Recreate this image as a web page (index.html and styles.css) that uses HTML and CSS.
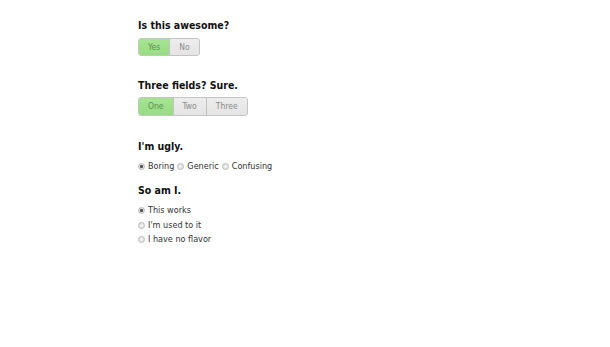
FILE: index.html
```html
<!DOCTYPE html>
<html>
<head>
<meta charset="utf-8">
<link rel="stylesheet" href="styles.css">
</head>
<body>
<div class="page">
  <section class="block block-seg">
    <h2 class="title">Is this awesome?</h2>
    <div class="seg">
      <span class="seg-item on">Yes</span><span class="seg-item">No</span>
    </div>
  </section>
  <section class="block block-seg">
    <h2 class="title">Three fields? Sure.</h2>
    <div class="seg">
      <span class="seg-item on">One</span><span class="seg-item">Two</span><span class="seg-item">Three</span>
    </div>
  </section>
  <section class="block block-radio">
    <h2 class="title">I'm ugly.</h2>
    <div class="radio-row">
      <label class="opt"><input type="radio" name="ugly" checked>Boring</label><label class="opt"><input type="radio" name="ugly">Generic</label><label class="opt"><input type="radio" name="ugly">Confusing</label>
    </div>
  </section>
  <section class="block block-radio2">
    <h2 class="title">So am I.</h2>
    <div class="radio-list">
      <label class="opt"><input type="radio" name="me" checked>This works</label>
      <label class="opt"><input type="radio" name="me">I'm used to it</label>
      <label class="opt"><input type="radio" name="me">I have no flavor</label>
    </div>
  </section>
</div>
</body>
</html>
```

FILE: styles.css
```css
html, body {
  margin: 0;
  padding: 0;
  background: #ffffff;
}
body {
  font-family: "DejaVu Sans Condensed", "DejaVu Sans", sans-serif;
  color: #222;
}
.page {
  padding: 18px 0 0 138px;
  display: flex;
  flex-direction: column;
  align-items: flex-start;
}
.title {
  margin: 0;
  font-size: 10.5px;
  line-height: 14px;
  font-weight: bold;
  color: #111;
}
.block-seg + .block-seg { margin-top: 22.4px; }
.block-radio { margin-top: 22.7px; }
.block-radio2 { margin-top: 9px; }

.seg {
  display: inline-flex;
  margin-top: 6px;
  border: 1px solid #c4c4c4;
  border-radius: 3px;
  overflow: hidden;
  background: #e8e8e8;
}
.block-seg + .block-seg .seg { margin-top: 5px; height: 17px; }
.seg-item {
  font-size: 8.5px;
  line-height: 16px;
  padding: 0 9px;
  color: #8a8a8a;
  background: linear-gradient(#ededed, #e4e4e4);
}
.seg-item + .seg-item {
  border-left: 1px solid #c2c2c2;
}
.seg-item.on {
  background: linear-gradient(#a6e492, #98dc84);
  color: #5e8e50;
}

.radio-row {
  margin-top: 6px;
  display: flex;
  font-size: 9px;
  line-height: 15px;
  color: #333;
}
.radio-row .opt { margin-right: 3px; }
.radio-list {
  margin-top: 6px;
  display: flex;
  flex-direction: column;
  font-size: 9px;
  line-height: 14.7px;
  color: #333;
}
.opt {
  display: flex;
  align-items: center;
}
.opt input {
  -webkit-appearance: none;
  appearance: none;
  margin: 0 3px 0 0;
  width: 7px;
  height: 7px;
  border: 1px solid #b8b8b8;
  border-radius: 50%;
  background: radial-gradient(circle, #f4f4f4 0, #dcdcdc 100%);
  box-sizing: border-box;
}
.opt input:checked {
  background: radial-gradient(circle, #555 0, #555 1.3px, #e2e2e2 1.8px);
}
```
